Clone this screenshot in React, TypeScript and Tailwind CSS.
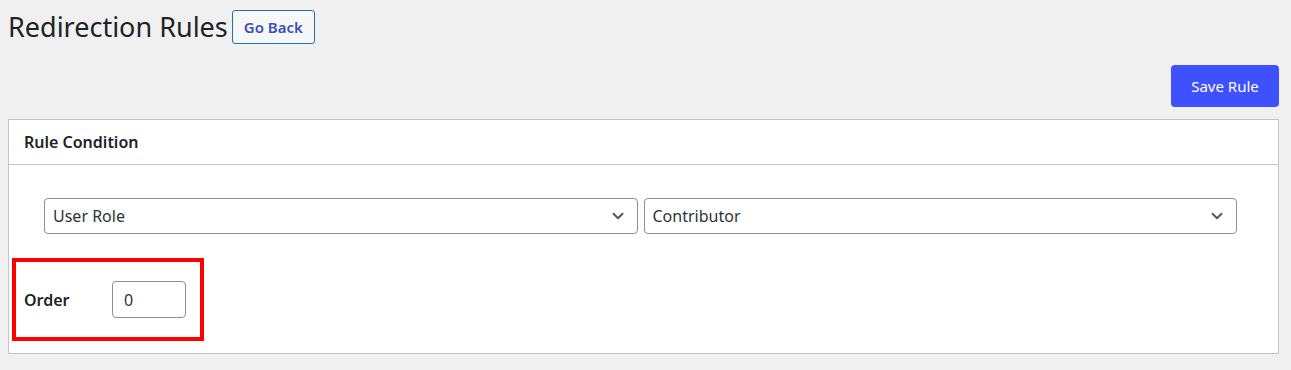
import { ChevronDown } from "lucide-react";

function SelectBox({ value }: { value: string }) {
  return (
    <div className="flex h-[36px] flex-1 items-center justify-between rounded-[4px] border border-[#8c8f94] bg-white pl-[8px] pr-[10px] text-[16px] text-[#2c3338]">
      <span>{value}</span>
      <ChevronDown className="size-[18px] text-[#50575e]" strokeWidth={2.5} />
    </div>
  );
}

export default function App() {
  return (
    <div className="min-h-[370px] bg-[#f0f0f1] pl-[8px] pr-[12px] pt-[10px] font-['Noto_Sans',sans-serif] text-[#1d2327]">
      {/* page title + back link */}
      <div className="flex items-center gap-[4px]">
        <h1 className="text-[27px] font-normal leading-[34px]">Redirection Rules</h1>
        <button className="h-[34px] rounded-[3px] border border-[#2271b1] bg-[#f6f7f7] px-[11px] text-[15px] font-semibold text-[#3c4fb8]">
          Go Back
        </button>
      </div>

      <div className="mt-[21px] flex justify-end">
        <button className="h-[42px] w-[108px] rounded-[4px] bg-[#3f50ff] text-[15px] text-white">Save Rule</button>
      </div>

      {/* rule condition card */}
      <section className="mt-[12px] border border-[#c3c4c7] bg-white pb-[12px]">
        <div className="flex h-[45px] items-center border-b border-[#c3c4c7] px-[15px] text-[16px] font-semibold">
          Rule Condition
        </div>
        <div className="flex gap-[6px] pl-[35px] pr-[41px] pt-[33px]">
          <SelectBox value="User Role" />
          <SelectBox value="Contributor" />
        </div>
        <div className="ml-[3px] mt-[24px] flex h-[83px] w-[192px] items-center border-4 border-[#ff0000] pl-[8px]">
          <span className="w-[88px] text-[16px] font-semibold">Order</span>
          <div className="flex h-[37px] w-[74px] items-center rounded-[4px] border border-[#8c8f94] px-[11px] text-[16px] text-[#2c3338]">
            0
          </div>
        </div>
      </section>
    </div>
  );
}
